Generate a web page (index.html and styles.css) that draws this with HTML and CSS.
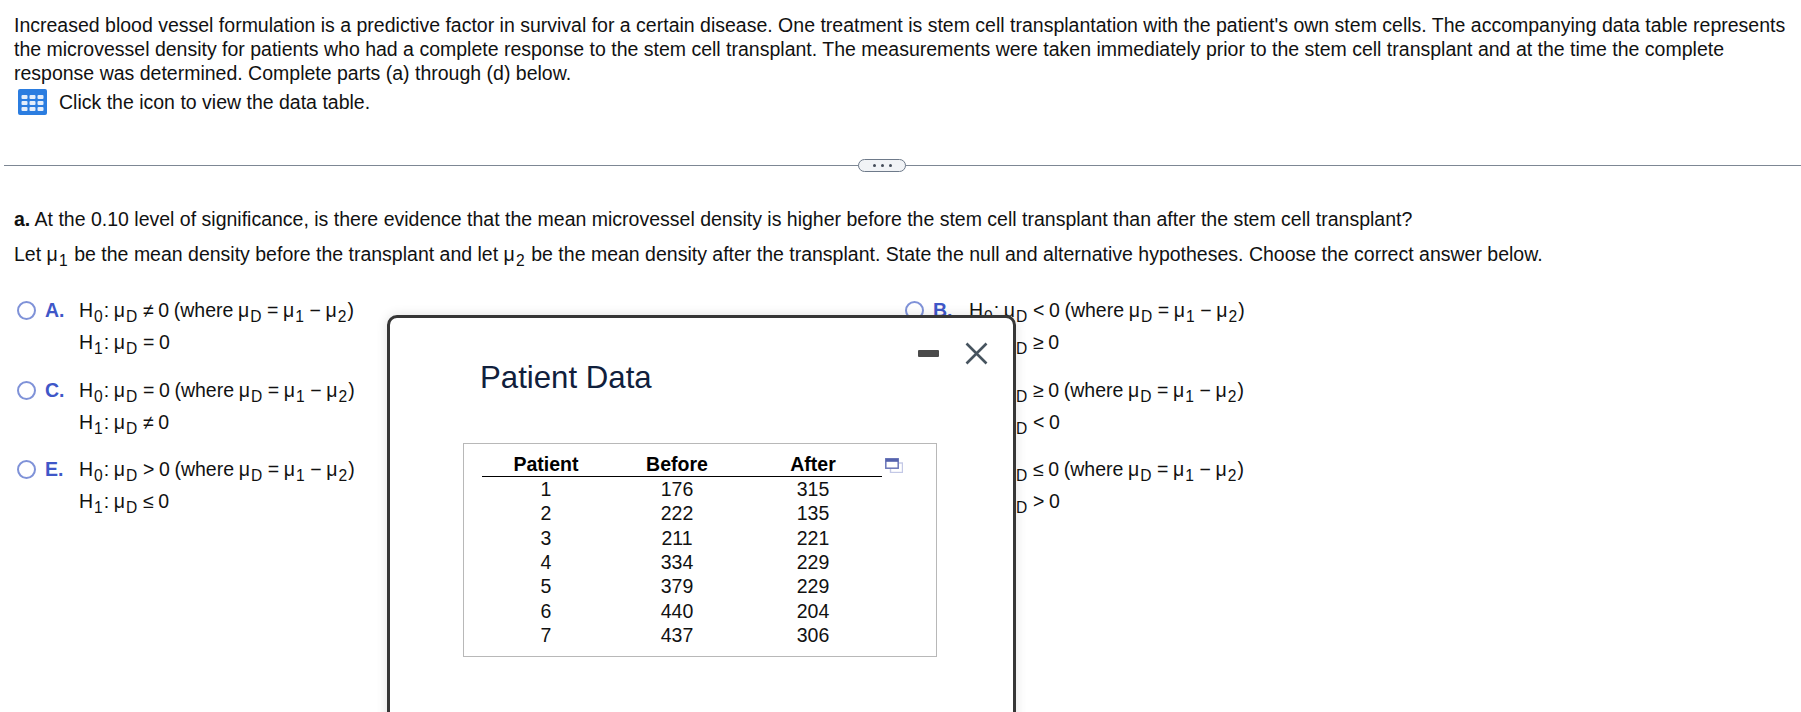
FILE: index.html
```html
<!DOCTYPE html>
<html lang="en">
<head>
    <meta charset="UTF-8">
    <title>Patient Data</title>
    <link rel="stylesheet" href="styles.css">
</head>
<body>
    <div class="question">
        <p class="intro">Increased blood vessel formulation is a predictive factor in survival for a certain disease. One treatment is stem cell transplantation with the patient's own stem cells. The accompanying data table represents the microvessel density for patients who had a complete response to the stem cell transplant. The measurements were taken immediately prior to the stem cell transplant and at the time the complete response was determined. Complete parts (a) through (d) below.</p>
        <div class="icon-line">
            <svg class="grid-icon" width="29" height="26" viewBox="0 0 29 26">
                <rect width="29" height="26" rx="2" fill="#2b7de0"/>
                <g fill="#e4eefb">
                    <rect x="3.5" y="6" width="6" height="4" rx="1"/><rect x="11.5" y="6" width="6" height="4" rx="1"/><rect x="19.5" y="6" width="6" height="4" rx="1"/>
                    <rect x="3.5" y="12" width="6" height="4" rx="1"/><rect x="11.5" y="12" width="6" height="4" rx="1"/><rect x="19.5" y="12" width="6" height="4" rx="1"/>
                    <rect x="3.5" y="18" width="6" height="4" rx="1"/><rect x="11.5" y="18" width="6" height="4" rx="1"/><rect x="19.5" y="18" width="6" height="4" rx="1"/>
                </g>
            </svg>
            <span>Click the icon to view the data table.</span>
        </div>
    </div>

    <div class="divider">
        <div class="dots"><i></i><i></i><i></i></div>
    </div>

    <div class="part">
        <p class="part-title"><b>a.</b> At the 0.10 level of significance, is there evidence that the mean microvessel density is higher before the stem cell transplant than after the stem cell transplant?</p>
        <p class="part-text">Let μ<sub>1</sub> be the mean density before the transplant and let μ<sub>2</sub> be the mean density after the transplant. State the null and alternative hypotheses. Choose the correct answer below.</p>

        <div class="options">
            <div class="option">
                <span class="radio"></span><span class="letter">A.</span>
                <div class="formula">
                    <div>H<sub>0</sub>: μ<sub>D</sub> ≠ 0 (where μ<sub>D</sub> = μ<sub>1</sub> − μ<sub>2</sub>)</div>
                    <div>H<sub>1</sub>: μ<sub>D</sub> = 0</div>
                </div>
            </div>
            <div class="option">
                <span class="radio"></span><span class="letter">B.</span>
                <div class="formula">
                    <div>H<sub>0</sub>: μ<sub>D</sub> &lt; 0 (where μ<sub>D</sub> = μ<sub>1</sub> − μ<sub>2</sub>)</div>
                    <div>H<sub>1</sub>: μ<sub>D</sub> ≥ 0</div>
                </div>
            </div>
            <div class="option">
                <span class="radio"></span><span class="letter">C.</span>
                <div class="formula">
                    <div>H<sub>0</sub>: μ<sub>D</sub> = 0 (where μ<sub>D</sub> = μ<sub>1</sub> − μ<sub>2</sub>)</div>
                    <div>H<sub>1</sub>: μ<sub>D</sub> ≠ 0</div>
                </div>
            </div>
            <div class="option">
                <span class="radio"></span><span class="letter">D.</span>
                <div class="formula">
                    <div>H<sub>0</sub>: μ<sub>D</sub> ≥ 0 (where μ<sub>D</sub> = μ<sub>1</sub> − μ<sub>2</sub>)</div>
                    <div>H<sub>1</sub>: μ<sub>D</sub> &lt; 0</div>
                </div>
            </div>
            <div class="option">
                <span class="radio"></span><span class="letter">E.</span>
                <div class="formula">
                    <div>H<sub>0</sub>: μ<sub>D</sub> &gt; 0 (where μ<sub>D</sub> = μ<sub>1</sub> − μ<sub>2</sub>)</div>
                    <div>H<sub>1</sub>: μ<sub>D</sub> ≤ 0</div>
                </div>
            </div>
            <div class="option">
                <span class="radio"></span><span class="letter">F.</span>
                <div class="formula">
                    <div>H<sub>0</sub>: μ<sub>D</sub> ≤ 0 (where μ<sub>D</sub> = μ<sub>1</sub> − μ<sub>2</sub>)</div>
                    <div>H<sub>1</sub>: μ<sub>D</sub> &gt; 0</div>
                </div>
            </div>
        </div>
    </div>

    <div class="modal">
        <div class="modal-controls">
            <span class="minimize"></span>
            <svg width="23" height="23" viewBox="0 0 23 23"><path d="M1.5 1.5 L21.5 21.5 M21.5 1.5 L1.5 21.5" stroke="#47545f" stroke-width="2.6" fill="none"/></svg>
        </div>
        <h2 class="modal-title">Patient Data</h2>
        <div class="table-box">
            <table class="data-table">
                <colgroup><col class="col-patient"><col class="col-before"><col class="col-after"></colgroup>
                <thead>
                    <tr><th>Patient</th><th>Before</th><th>After</th></tr>
                </thead>
                <tbody>
                    <tr><td>1</td><td>176</td><td>315</td></tr>
                    <tr><td>2</td><td>222</td><td>135</td></tr>
                    <tr><td>3</td><td>211</td><td>221</td></tr>
                    <tr><td>4</td><td>334</td><td>229</td></tr>
                    <tr><td>5</td><td>379</td><td>229</td></tr>
                    <tr><td>6</td><td>440</td><td>204</td></tr>
                    <tr><td>7</td><td>437</td><td>306</td></tr>
                </tbody>
            </table>
            <svg class="copy-icon" width="18" height="15" viewBox="0 0 18 15">
                <rect x="5.5" y="5" width="12" height="9.5" fill="#fff" stroke="#c3c8e6" stroke-width="1.4"/>
                <rect x="0.8" y="0.8" width="12.4" height="9.4" fill="#fff" stroke="#6a76b8" stroke-width="1.5"/>
                <rect x="0.8" y="0.8" width="12.4" height="3" fill="#5563ad"/>
            </svg>
        </div>
    </div>
</body>
</html>
```

FILE: styles.css
```css
html, body {
    height: 100%;
}
body {
    position: relative;
    margin: 0;
    height: 712px;
    overflow: hidden;
    background: #fff;
    color: #111;
    font-family: "Liberation Sans", Arial, sans-serif;
    font-size: 19.5px;
}
p {
    margin: 0;
}
sub {
    font-size: 0.8em;
    line-height: 0;
    vertical-align: -0.35em;
}
.question {
    padding: 13px 14px 0 14px;
}
.intro {
    line-height: 24px;
}
.icon-line {
    display: flex;
    align-items: center;
    gap: 12px;
    margin-top: 4px;
    padding-left: 4px;
    height: 26px;
}
.divider {
    display: flex;
    justify-content: center;
    margin: 50px 0 0 4px;
    padding-right: 41px;
    border-top: 1px solid #7d8794;
    height: 1px;
}
.dots {
    display: flex;
    justify-content: center;
    align-items: center;
    gap: 5px;
    flex: none;
    width: 46px;
    height: 11px;
    margin-top: -7px;
    background: #f1f3f6;
    border: 1px solid #6e7a8a;
    border-radius: 7px;
}
.dots i {
    width: 3px;
    height: 3px;
    border-radius: 50%;
    background: #444c58;
}
.part {
    padding: 40px 14px 0 14px;
}
.part-title {
    line-height: 24px;
}
.part-text {
    margin-top: 11px;
    line-height: 24px;
}
.part-text sub {
    margin: 0 1.2px;
}
.options {
    display: grid;
    grid-template-columns: 888px 1fr;
    row-gap: 15.5px;
    margin-top: 31px;
}
.option {
    display: flex;
    align-items: flex-start;
    height: 64px;
}
.option:nth-child(even) .letter {
    width: 36px;
}
.radio {
    flex: none;
    width: 15px;
    height: 15px;
    margin: 4px 0 0 3px;
    border: 2px solid #7f92d8;
    border-radius: 50%;
}
.letter {
    flex: none;
    width: 34px;
    margin-left: 9px;
    color: #3f57c8;
    font-weight: bold;
    line-height: 26px;
}
.formula div {
    height: 32px;
    line-height: 26px;
    white-space: nowrap;
    word-spacing: -0.8px;
}
.formula sub {
    margin: 0 1px;
}
.modal {
    position: absolute;
    left: 387px;
    top: 315px;
    box-sizing: border-box;
    width: 629px;
    height: 420px;
    padding: 0 78px;
    background: #fff;
    border: 3px solid #363636;
    border-radius: 10px;
    box-shadow: 0 0 12px rgba(0, 0, 0, 0.12);
}
.modal-controls {
    position: absolute;
    top: 24px;
    right: 25px;
    display: flex;
    align-items: center;
    gap: 26px;
}
.minimize {
    width: 21px;
    height: 7px;
    background: #4a4a4a;
    border-radius: 1px;
}
.modal-title {
    margin: 40px 0 0 12px;
    font-size: 31.2px;
    font-weight: normal;
    line-height: 40px;
    color: #10203c;
}
.table-box {
    position: relative;
    box-sizing: border-box;
    width: 474px;
    height: 214px;
    margin-top: 45px;
    margin-left: -5px;
    padding: 8px 0 0 18px;
    border: 1px solid #b8b8b8;
}
.data-table {
    border-collapse: collapse;
    width: 400px;
    table-layout: fixed;
}
.col-patient {
    width: 128px;
}
.col-before {
    width: 134px;
}
.col-after {
    width: 138px;
}
.data-table th {
    padding: 0;
    height: 24px;
    line-height: 24px;
    border-bottom: 1px solid #000;
    color: #000;
}
.data-table td {
    padding: 0;
    height: 24.3px;
    line-height: 24px;
    text-align: center;
}
.copy-icon {
    position: absolute;
    left: 421px;
    top: 14px;
}
```
